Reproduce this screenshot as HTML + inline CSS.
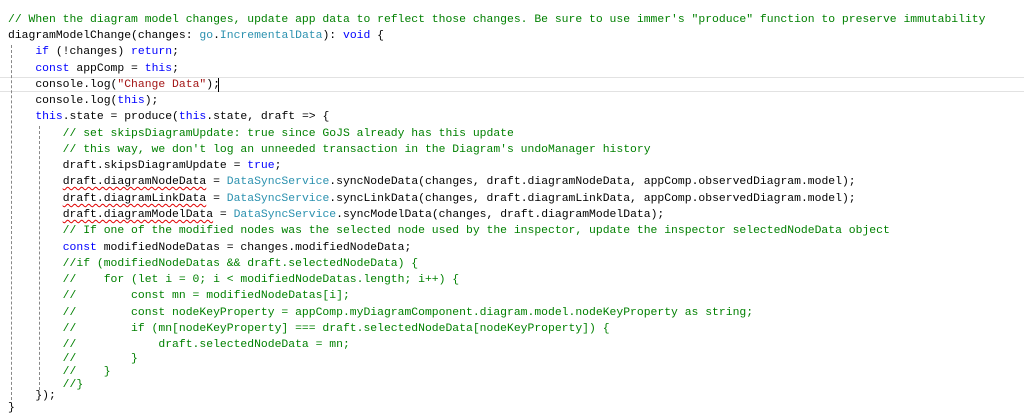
<!DOCTYPE html>
<html><head><meta charset="utf-8"><style>
body{margin:0;width:1024px;height:416px;background:#fff;overflow:hidden;position:relative;font-family:"Liberation Mono",monospace;font-size:11.4px;color:#000}
.l{position:absolute;left:8px;height:16px;line-height:16px;white-space:pre}
.c{color:#008000}.k{color:#0000ff}.s{color:#a31515}.t{color:#2b91af}
.sq{text-decoration:underline wavy #e00000;text-decoration-thickness:1px;text-underline-offset:2px}
.g{position:absolute;border-left:1px dashed #888;width:0}
.hl{position:absolute;left:0;top:77px;width:1024px;height:15px;border-top:1px solid #e2e2e2;border-bottom:1px solid #e2e2e2;box-sizing:border-box}
.cur{position:absolute;left:218px;top:78px;width:1px;height:14px;background:#000}
</style></head><body>
<div class="hl"></div><div class="cur"></div>
<div class="g" style="left:11px;top:45px;height:355px"></div>
<div class="g" style="left:39px;top:126px;height:264px"></div>
<div class="l c" style="top:12px">// When the diagram model changes, update app data to reflect those changes. Be sure to use immer's "produce" function to preserve immutability</div>
<div class="l" style="top:28px">diagramModelChange(changes: <span class="t">go</span>.<span class="t">IncrementalData</span>): <span class="k">void</span> {</div>
<div class="l" style="top:44px">    <span class="k">if</span> (!changes) <span class="k">return</span>;</div>
<div class="l" style="top:61px">    <span class="k">const</span> appComp = <span class="k">this</span>;</div>
<div class="l" style="top:77px">    console.log(<span class="s">"Change Data"</span>);</div>
<div class="l" style="top:93px">    console.log(<span class="k">this</span>);</div>
<div class="l" style="top:109px">    <span class="k">this</span>.state = produce(<span class="k">this</span>.state, draft =&gt; {</div>
<div class="l c" style="top:126px">        // set skipsDiagramUpdate: true since GoJS already has this update</div>
<div class="l c" style="top:142px">        // this way, we don't log an unneeded transaction in the Diagram's undoManager history</div>
<div class="l" style="top:158px">        draft.skipsDiagramUpdate = <span class="k">true</span>;</div>
<div class="l" style="top:174px">        <span class="sq">draft.diagramNodeData</span> = <span class="t">DataSyncService</span>.syncNodeData(changes, draft.diagramNodeData, appComp.observedDiagram.model);</div>
<div class="l" style="top:191px">        <span class="sq">draft.diagramLinkData</span> = <span class="t">DataSyncService</span>.syncLinkData(changes, draft.diagramLinkData, appComp.observedDiagram.model);</div>
<div class="l" style="top:207px">        <span class="sq">draft.diagramModelData</span> = <span class="t">DataSyncService</span>.syncModelData(changes, draft.diagramModelData);</div>
<div class="l c" style="top:223px">        // If one of the modified nodes was the selected node used by the inspector, update the inspector selectedNodeData object</div>
<div class="l" style="top:240px">        <span class="k">const</span> modifiedNodeDatas = changes.modifiedNodeData;</div>
<div class="l c" style="top:256px">        //if (modifiedNodeDatas &amp;&amp; draft.selectedNodeData) {</div>
<div class="l c" style="top:272px">        //    for (let i = 0; i &lt; modifiedNodeDatas.length; i++) {</div>
<div class="l c" style="top:288px">        //        const mn = modifiedNodeDatas[i];</div>
<div class="l c" style="top:305px">        //        const nodeKeyProperty = appComp.myDiagramComponent.diagram.model.nodeKeyProperty as string;</div>
<div class="l c" style="top:321px">        //        if (mn[nodeKeyProperty] === draft.selectedNodeData[nodeKeyProperty]) {</div>
<div class="l c" style="top:337px">        //            draft.selectedNodeData = mn;</div>
<div class="l c" style="top:351px">        //        }</div>
<div class="l c" style="top:364px">        //    }</div>
<div class="l c" style="top:377px">        //}</div>
<div class="l" style="top:388px">    });</div>
<div class="l" style="top:400px">}</div>
</body></html>
